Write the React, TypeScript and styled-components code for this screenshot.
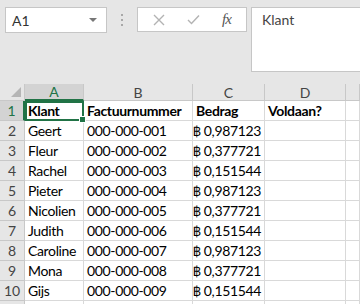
import styled, { createGlobalStyle } from 'styled-components';

const GlobalStyle = createGlobalStyle`
  html, body { margin: 0; padding: 0; background: #ffffff; }
  body { font-family: Lato, "Liberation Sans", sans-serif; overflow: hidden; }
`;

const Window = styled.div`
  width: 360px;
  height: 304px;
  overflow: hidden;
  background: #e6e6e6;
`;

const Toolbar = styled.div`
  display: flex;
  align-items: flex-start;
  height: 84px;
  padding: 7px 0 0 5px;
  box-sizing: border-box;
`;

const NameBox = styled.div`
  width: 102px;
  height: 26px;
  box-sizing: border-box;
  background: #fff;
  border: 1px solid #c6c6c6;
  display: flex;
  align-items: center;
  justify-content: space-between;
  padding: 0 9px 0 6px;
  font-size: 14px;
  color: #333;
`;

const Caret = styled.span`
  width: 0;
  height: 0;
  border-left: 4px solid transparent;
  border-right: 4px solid transparent;
  border-top: 4px solid #777;
`;

const Grip = styled.div`
  width: 30px;
  height: 26px;
  display: flex;
  flex-direction: column;
  align-items: center;
  justify-content: center;
  gap: 3px;

  span {
    width: 2px;
    height: 2px;
    background: #a8a8a8;
  }
`;

const ButtonBox = styled.div`
  width: 110px;
  height: 25px;
  box-sizing: border-box;
  background: #fff;
  border: 1px solid #c6c6c6;
  display: flex;
  align-items: center;
  justify-content: space-around;
  padding: 0 4px 0 4px;
`;

const Fx = styled.span`
  font-family: "Liberation Serif", serif;
  font-style: italic;
  font-size: 15px;
  color: #555;
  letter-spacing: -1px;
`;

const FormulaBar = styled.div`
  margin-left: 4px;
  flex: 1;
  height: 65px;
  box-sizing: border-box;
  background: #fff;
  border: 1px solid #c6c6c6;
  border-right: none;
  padding: 3px 0 0 10px;
  font-size: 14px;
  color: #444;
`;

const Grid = styled.div`
  display: grid;
  grid-template-columns: 25px 59px 109px 72px 81px 1fr;
  grid-auto-rows: 20px;
  grid-template-rows: 17px;
  background: #fff;
  height: 220px;
`;

const ColHead = styled.div<{ $active?: boolean }>`
  box-sizing: border-box;
  display: flex;
  align-items: center;
  justify-content: center;
  font-size: 14px;
  background: ${({ $active }) => ($active ? '#d3d3d3' : '#e6e6e6')};
  color: ${({ $active }) => ($active ? '#217346' : '#444')};
  border-right: 1px solid #c8c8c8;
  border-bottom: ${({ $active }) => ($active ? '2px solid #217346' : '1px solid #c8c8c8')};
`;

const Corner = styled.div`
  box-sizing: border-box;
  background: #e6e6e6;
  border-right: 1px solid #c8c8c8;
  border-bottom: 1px solid #c8c8c8;
  position: relative;

  &::after {
    content: '';
    position: absolute;
    right: 3px;
    bottom: 3px;
    width: 0;
    height: 0;
    border-left: 10px solid transparent;
    border-bottom: 10px solid #b5b5b5;
  }
`;

const RowHead = styled.div<{ $active?: boolean }>`
  box-sizing: border-box;
  display: flex;
  align-items: center;
  justify-content: center;
  font-size: 14px;
  background: ${({ $active }) => ($active ? '#d3d3d3' : '#e6e6e6')};
  color: ${({ $active }) => ($active ? '#217346' : '#444')};
  border-right: ${({ $active }) => ($active ? '2px solid #217346' : '1px solid #c8c8c8')};
  border-bottom: 1px solid #c8c8c8;
`;

const Cell = styled.div<{ $bold?: boolean; $right?: boolean; $selected?: boolean }>`
  box-sizing: border-box;
  display: flex;
  align-items: center;
  justify-content: ${({ $right }) => ($right ? 'flex-end' : 'flex-start')};
  padding: 0 3px 0 3px;
  font-size: 14px;
  letter-spacing: -0.35px;
  font-weight: ${({ $bold }) => ($bold ? 700 : 400)};
  color: #000;
  white-space: nowrap;
  overflow: visible;
  border-right: 1px solid #d9d9d9;
  border-bottom: 1px solid #d9d9d9;
  position: relative;

  ${({ $selected }) =>
    $selected &&
    `
    outline: 2px solid #217346;
    outline-offset: -2px;
    &::after {
      content: '';
      position: absolute;
      right: -3px;
      bottom: -3px;
      width: 5px;
      height: 5px;
      background: #217346;
      border: 1px solid #fff;
      z-index: 2;
    }
  `}
`;

const Baht = styled.span`
  font-size: 13px;
  margin-right: 3px;
`;

const rows = [
  ['Geert', '000-000-001', '0,987123'],
  ['Fleur', '000-000-002', '0,377721'],
  ['Rachel', '000-000-003', '0,151544'],
  ['Pieter', '000-000-004', '0,987123'],
  ['Nicolien', '000-000-005', '0,377721'],
  ['Judith', '000-000-006', '0,151544'],
  ['Caroline', '000-000-007', '0,987123'],
  ['Mona', '000-000-008', '0,377721'],
  ['Gijs', '000-000-009', '0,151544'],
];

export default function App() {
  return (
    <Window>
      <GlobalStyle />
      <Toolbar>
        <NameBox>
          A1
          <Caret />
        </NameBox>
        <Grip>
          <span />
          <span />
          <span />
        </Grip>
        <ButtonBox>
          <svg width="12" height="12" viewBox="0 0 12 12">
            <path d="M1 1 L11 11 M11 1 L1 11" stroke="#b3b3b3" strokeWidth="1.4" fill="none" />
          </svg>
          <svg width="13" height="11" viewBox="0 0 13 11">
            <path d="M1 6 L4.5 9.5 L12 1.5" stroke="#b3b3b3" strokeWidth="1.4" fill="none" />
          </svg>
          <Fx>fx</Fx>
        </ButtonBox>
        <FormulaBar>Klant</FormulaBar>
      </Toolbar>
      <Grid>
        <Corner />
        <ColHead $active>A</ColHead>
        <ColHead>B</ColHead>
        <ColHead>C</ColHead>
        <ColHead>D</ColHead>
        <ColHead />

        <RowHead $active>1</RowHead>
        <Cell $bold $selected>Klant</Cell>
        <Cell $bold>Factuurnummer</Cell>
        <Cell $bold>Bedrag</Cell>
        <Cell $bold>Voldaan?</Cell>
        <Cell />

        {rows.map(([name, nr, amount], i) => (
          <Row key={nr} index={i + 2} name={name} nr={nr} amount={amount} />
        ))}

        <RowHead>11</RowHead>
        <Cell />
        <Cell />
        <Cell />
        <Cell />
        <Cell />
      </Grid>
    </Window>
  );
}

function Row({ index, name, nr, amount }: { index: number; name: string; nr: string; amount: string }) {
  return (
    <>
      <RowHead>{index}</RowHead>
      <Cell>{name}</Cell>
      <Cell>{nr}</Cell>
      <Cell $right>
        <Baht>฿</Baht>
        {amount}
      </Cell>
      <Cell />
      <Cell />
    </>
  );
}
